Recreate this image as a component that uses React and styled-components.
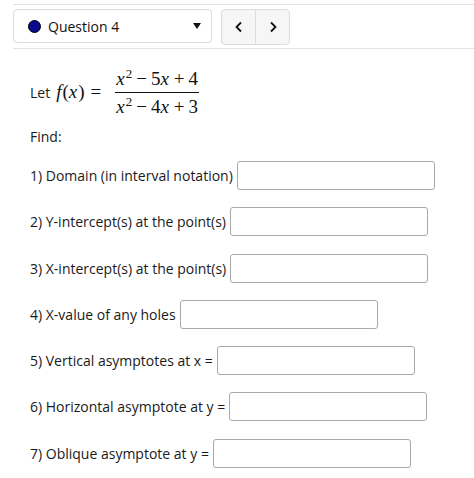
import styled, { createGlobalStyle } from "styled-components"

const GlobalStyle = createGlobalStyle`
  body {
    margin: 0;
    background: #fff;
    font-family: "Open Sans", "DejaVu Sans", sans-serif;
    color: #1a1a1a;
  }
`

const questions = [
  { label: "1) Domain (in interval notation)" },
  { label: "2) Y-intercept(s) at the point(s)" },
  { label: "3) X-intercept(s) at the point(s)" },
  { label: "4) X-value of any holes" },
  { label: "5) Vertical asymptotes at x =" },
  { label: "6) Horizontal asymptote at y =" },
  { label: "7) Oblique asymptote at y =" },
]

const Page = styled.div`
  padding-top: 4px;
`

const Toolbar = styled.div`
  margin-left: 13px;
  border-top: 1px solid #e2e2e2;
  border-bottom: 1px solid #e2e2e2;
  padding: 4px 0 3px;
  display: flex;
  gap: 9px;
`

const Select = styled.div`
  width: 199px;
  height: 34px;
  box-sizing: border-box;
  border: 1px solid #dcdcdc;
  border-radius: 4px;
  display: flex;
  align-items: center;
  padding: 0 10px 0 14px;
  font-size: 14px;
  color: #111;
`

const Dot = styled.span`
  width: 11px;
  height: 11px;
  border-radius: 50%;
  background: #0a0a8c;
  border: 1px solid #000;
  margin-right: 7px;
`

const Caret = styled.span`
  margin-left: auto;
  width: 0;
  height: 0;
  border-left: 4px solid transparent;
  border-right: 4px solid transparent;
  border-top: 6px solid #111;
`

const NavGroup = styled.div`
  display: flex;
  height: 34px;
  border: 1px solid #dcdcdc;
  border-radius: 4px;
  background: #f6f6f6;
  overflow: hidden;
`

const NavButton = styled.div`
  width: 33px;
  display: flex;
  align-items: center;
  justify-content: center;
  & + & {
    border-left: 1px solid #dcdcdc;
  }
`

const Content = styled.div`
  padding: 12px 0 0 30px;
  font-size: 14px;
`

const Definition = styled.div`
  display: flex;
  align-items: center;
  height: 62px;
`

const Lead = styled.span`
  margin-right: 6px;
`

const MathText = styled.span`
  font-family: "Liberation Serif", "DejaVu Serif", serif;
  font-size: 19px;
  color: #111;
  margin-right: 8px;
`

const Var = styled.i`
  font-family: "Liberation Serif", serif;
  margin-right: 1px;
`

const Op = styled.span`
  margin: 0 ${p => p.$space || 4}px;
`

const Fraction = styled.span`
  display: inline-flex;
  flex-direction: column;
  align-items: center;
  font-family: "Liberation Serif", serif;
  font-size: 19px;
  line-height: 21px;
  color: #111;
`

const Numer = styled.span`
  padding: 0 1px 3px;
  border-bottom: 1px solid #111;
`

const Denom = styled.span`
  padding: 3px 1px 0;
`

const Sup = styled.sup`
  font-size: 0.68em;
  line-height: 0;
`

const Find = styled.div`
  margin: 4px 0 15px;
  line-height: 19px;
`

const List = styled.div`
  display: flex;
  flex-direction: column;
  gap: 17.3px;
`

const Row = styled.div`
  display: flex;
  align-items: center;
  gap: 4px;
`

const Answer = styled.input`
  width: 198px;
  height: 29px;
  box-sizing: border-box;
  border: 1px solid #a9a9a9;
  border-radius: 3px;
  padding: 0 6px;
  font: inherit;
`

function Chevron({ dir }) {
  return (
    <svg width="10" height="12" viewBox="0 0 10 12">
      <path
        d={dir === "left" ? "M7 1.5 L2.5 6 L7 10.5" : "M3 1.5 L7.5 6 L3 10.5"}
        fill="none"
        stroke="#111"
        strokeWidth="1.8"
      />
    </svg>
  )
}

export default function App() {
  return (
    <Page>
      <GlobalStyle />
      <Toolbar>
        <Select>
          <Dot />
          Question 4
          <Caret />
        </Select>
        <NavGroup>
          <NavButton><Chevron dir="left" /></NavButton>
          <NavButton><Chevron dir="right" /></NavButton>
        </NavGroup>
      </Toolbar>
      <Content>
        <Definition>
          <Lead>Let</Lead>
          <MathText>
            <Var>f</Var>(<Var>x</Var>)<Op $space={6}>=</Op>
          </MathText>
          <Fraction>
            <Numer>
              <Var>x</Var><Sup>2</Sup><Op>−</Op>5<Var>x</Var><Op>+</Op>4
            </Numer>
            <Denom>
              <Var>x</Var><Sup>2</Sup><Op>−</Op>4<Var>x</Var><Op>+</Op>3
            </Denom>
          </Fraction>
        </Definition>
        <Find>Find:</Find>
        <List>
          {questions.map(q => (
            <Row key={q.label}>
              <span>{q.label}</span>
              <Answer type="text" />
            </Row>
          ))}
        </List>
      </Content>
    </Page>
  )
}
